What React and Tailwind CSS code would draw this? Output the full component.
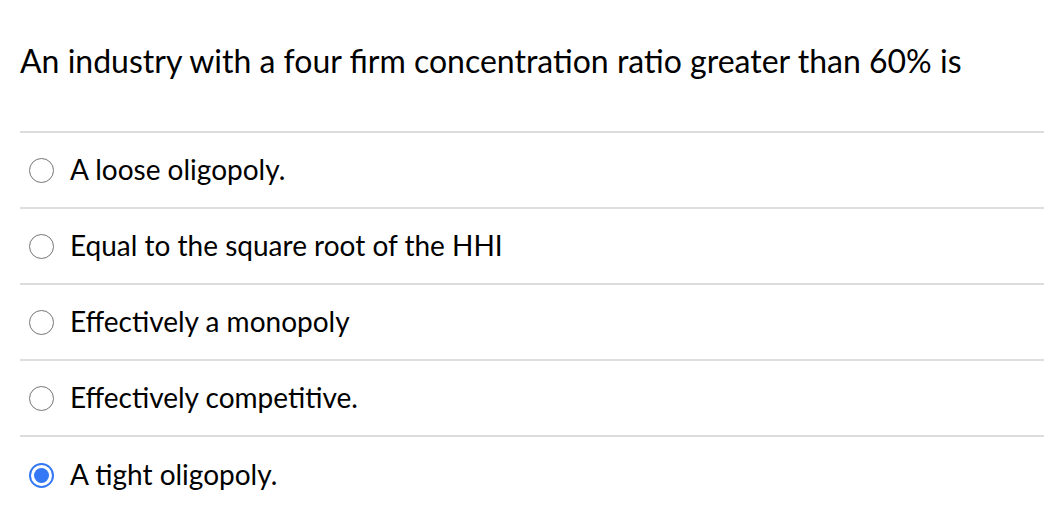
import React, { useState } from "react";

const options = [
  "A loose oligopoly.",
  "Equal to the square root of the HHI",
  "Effectively a monopoly",
  "Effectively competitive.",
  "A tight oligopoly.",
];

const Radio = ({ checked }) =>
  checked ? (
    <span className="flex h-[25px] w-[25px] shrink-0 items-center justify-center rounded-full border-[2.5px] border-[#3478f6] bg-white">
      <span className="h-[15px] w-[15px] rounded-full bg-[#3478f6]" />
    </span>
  ) : (
    <span className="h-[25px] w-[25px] shrink-0 rounded-full border-[1.5px] border-[#767676] bg-white" />
  );

export default function App() {
  const [selected, setSelected] = useState(4);

  return (
    <div
      className="min-h-screen w-full bg-white pl-[20px] pr-[6px] text-black"
      style={{ fontFamily: "Lato, 'Open Sans', sans-serif" }}
    >
      <h1 className="pt-[40px] pb-[49px] text-[32px] leading-[42px] font-normal">
        An industry with a four firm concentration ratio greater than 60% is
      </h1>

      <div className="border-t-2 border-[#dddddd]">
        {options.map((opt, i) => (
          <label
            key={opt}
            onClick={() => setSelected(i)}
            className={`flex h-[76px] cursor-pointer items-center gap-[16px] pl-[9px] ${
              i < options.length - 1 ? "border-b-2 border-[#dddddd]" : ""
            }`}
          >
            <Radio checked={selected === i} />
            <span className="mb-[3px] text-[28px] leading-none">{opt}</span>
          </label>
        ))}
      </div>
    </div>
  );
}
